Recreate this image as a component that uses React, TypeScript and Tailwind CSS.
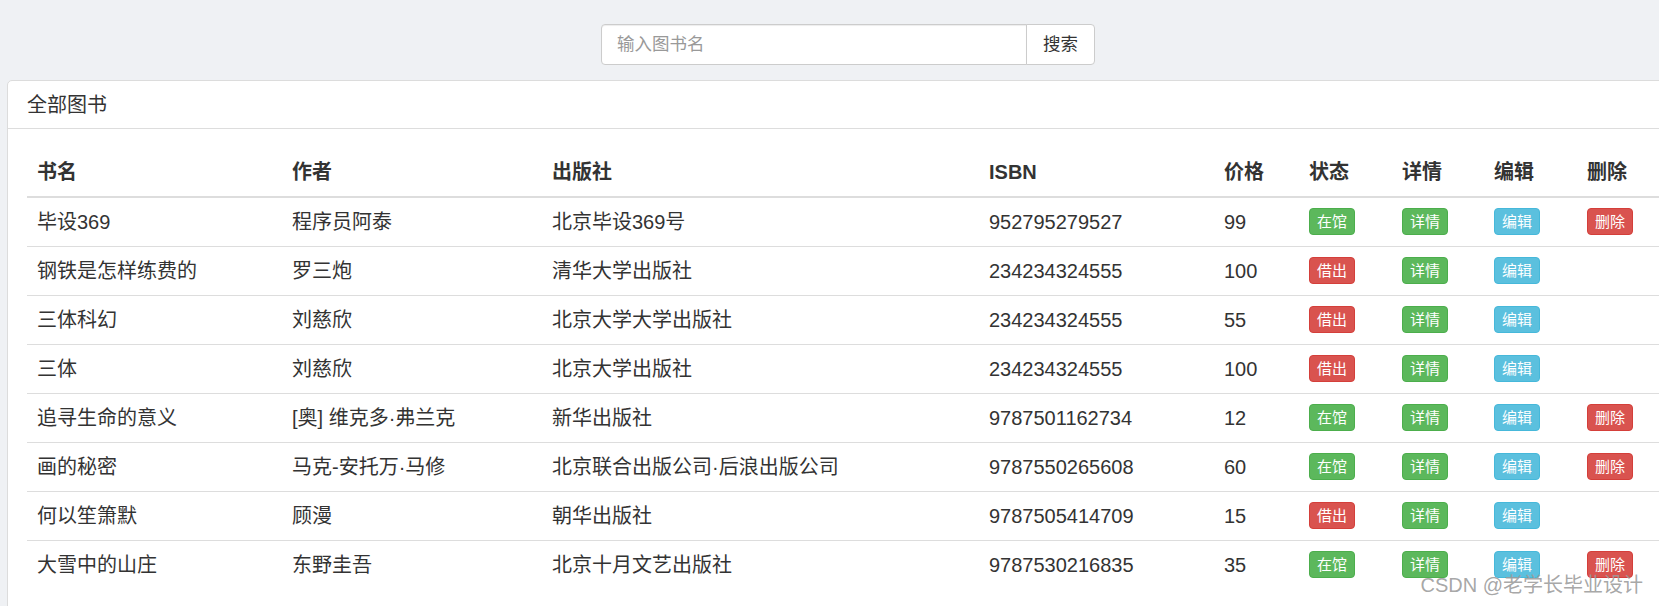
import React from "react";

type Row = {
  name: string;
  author: string;
  press: string;
  isbn: string;
  price: string;
  inLib: boolean;
};

const rows: Row[] = [
  { name: "毕设369", author: "程序员阿泰", press: "北京毕设369号", isbn: "952795279527", price: "99", inLib: true },
  { name: "钢铁是怎样练费的", author: "罗三炮", press: "清华大学出版社", isbn: "234234324555", price: "100", inLib: false },
  { name: "三体科幻", author: "刘慈欣", press: "北京大学大学出版社", isbn: "234234324555", price: "55", inLib: false },
  { name: "三体", author: "刘慈欣", press: "北京大学出版社", isbn: "234234324555", price: "100", inLib: false },
  { name: "追寻生命的意义", author: "[奥] 维克多·弗兰克", press: "新华出版社", isbn: "9787501162734", price: "12", inLib: true },
  { name: "画的秘密", author: "马克-安托万·马修", press: "北京联合出版公司·后浪出版公司", isbn: "9787550265608", price: "60", inLib: true },
  { name: "何以笙箫默", author: "顾漫", press: "朝华出版社", isbn: "9787505414709", price: "15", inLib: false },
  { name: "大雪中的山庄", author: "东野圭吾", press: "北京十月文艺出版社", isbn: "9787530216835", price: "35", inLib: true },
];

const font = { fontFamily: '"Liberation Sans", Arial, "Noto Sans CJK SC", sans-serif' };

function Badge({ color, children }: { color: "green" | "red" | "blue"; children: React.ReactNode }) {
  const cls =
    color === "green"
      ? "bg-[#5cb85c] border-[#4cae4c]"
      : color === "red"
      ? "bg-[#d9534f] border-[#d43f3a]"
      : "bg-[#5bc0de] border-[#46b8da]";
  return (
    <span
      className={`inline-flex h-[27px] items-center rounded-[4px] border px-[7px] text-[15px] leading-none text-white ${cls}`}
    >
      {children}
    </span>
  );
}

const td = "h-[49px] px-[10px] py-0 align-middle leading-[28px] whitespace-nowrap";
const tdBadge = "h-[49px] px-[10px] py-0 align-middle leading-none";

export default function App() {
  return (
    <div className="relative h-[606px] w-[1659px] overflow-hidden bg-[#eff1f4] text-[#333]" style={font}>
      <div className="w-[1696px]">
        <div className="flex justify-center pt-[24px]">
          <div className="flex h-[41px] w-[494px]">
            <div className="flex flex-1 items-center rounded-l-[4px] border border-[#ccc] bg-white pl-[15px] text-[17.5px] text-[#999] shadow-[inset_0_1px_1px_rgba(0,0,0,0.075)]">
              输入图书名
            </div>
            <div className="-ml-px flex w-[69px] items-center justify-center rounded-r-[4px] border border-[#ccc] bg-white text-[17.5px] text-[#333]">
              搜索
            </div>
          </div>
        </div>

        <div className="ml-[7px] mt-[15px] w-[1682px] rounded-[5px] border border-[#dcdcdc] bg-white pb-[40px]">
          <div className="flex h-[48px] items-center border-b border-[#ddd] pl-[19px] text-[20px] leading-none">
            全部图书
          </div>
          <div className="px-[19px] pt-[19px]">
            <table className="w-[1642px] table-fixed border-collapse text-left text-[20px]">
              <colgroup>
                <col className="w-[255px]" />
                <col className="w-[260px]" />
                <col className="w-[437px]" />
                <col className="w-[235px]" />
                <col className="w-[85px]" />
                <col className="w-[93px]" />
                <col className="w-[92px]" />
                <col className="w-[93px]" />
                <col />
              </colgroup>
              <thead>
                <tr className="border-b-2 border-[#ddd]">
                  {["书名", "作者", "出版社", "ISBN", "价格", "状态", "详情", "编辑", "删除"].map((h) => (
                    <th key={h} className="h-[49px] px-[10px] py-0 align-middle font-bold leading-[28px]">
                      {h}
                    </th>
                  ))}
                </tr>
              </thead>
              <tbody>
                {rows.map((r, i) => (
                  <tr key={i} className={i === 0 ? "" : "border-t border-[#ddd]"}>
                    <td className={td}>{r.name}</td>
                    <td className={td}>{r.author}</td>
                    <td className={td}>{r.press}</td>
                    <td className={td}>{r.isbn}</td>
                    <td className={td}>{r.price}</td>
                    <td className={tdBadge}>
                      {r.inLib ? <Badge color="green">在馆</Badge> : <Badge color="red">借出</Badge>}
                    </td>
                    <td className={tdBadge}>
                      <Badge color="green">详情</Badge>
                    </td>
                    <td className={tdBadge}>
                      <Badge color="blue">编辑</Badge>
                    </td>
                    <td className={tdBadge}>{r.inLib ? <Badge color="red">删除</Badge> : null}</td>
                  </tr>
                ))}
              </tbody>
            </table>
          </div>
        </div>
      </div>

      <div className="absolute right-[16px] top-[575px] whitespace-nowrap text-[20px] leading-none text-[#9c9c9c]/90">
        CSDN @老学长毕业设计
      </div>
    </div>
  );
}
